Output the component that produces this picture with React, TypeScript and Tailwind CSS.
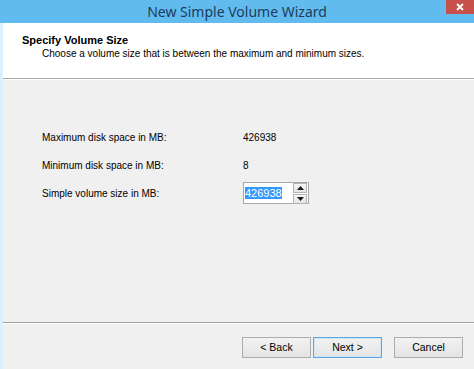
import React from 'react';

const labelFont = { fontFamily: '"Liberation Sans", Arial, sans-serif' };

function SpinButton({ up }: { up?: boolean }) {
  return (
    <div className="flex h-[10px] w-[14px] items-center justify-center border border-[#b5b5b5] bg-gradient-to-b from-[#f7f7f7] to-[#e3e3e3]">
      <svg width="7" height="4" viewBox="0 0 7 4">
        {up ? <polygon points="3.5,0 7,4 0,4" fill="#1a1a1a" /> : <polygon points="0,0 7,0 3.5,4" fill="#1a1a1a" />}
      </svg>
    </div>
  );
}

function WizardButton({ label, primary }: { label: string; primary?: boolean }) {
  return (
    <button
      className={
        'h-[21px] w-[69px] border bg-gradient-to-b from-[#f2f2f2] to-[#e4e4e4] text-[10.5px] text-black ' +
        (primary ? 'border-[#5ea6e3] shadow-[inset_0_0_0_1px_#cfe6f8]' : 'border-[#acacac]')
      }
    >
      {label}
    </button>
  );
}

export default function App() {
  return (
    <div className="flex h-[369px] w-[474px] flex-col overflow-hidden bg-[#f0f0f0]" style={labelFont}>
      {/* Title bar */}
      <div className="relative flex h-[23px] items-center justify-center bg-[#62bbee]">
        <span className="text-[14px] leading-none text-[#1d3b5c]" style={{ fontFamily: '"Noto Sans", "Open Sans", sans-serif' }}>
          New Simple Volume Wizard
        </span>
        <div className="absolute right-0 top-0 flex h-[14px] w-[28px] items-center justify-center bg-[#c8504c]">
          <svg width="8" height="8" viewBox="0 0 8 8">
            <path d="M1 1 L7 7 M7 1 L1 7" stroke="#ffffff" strokeWidth="1.8" />
          </svg>
        </div>
      </div>

      <div className="flex flex-1">
        <div className="w-[3px] bg-[#dcf0fb]" />
        <div className="flex flex-1 flex-col">
          {/* Header */}
          <div className="h-[56px] border-b border-[#a9a9a9] bg-white pl-[19px] pt-[10px]">
            <div className="text-[11px] font-bold leading-[14px] text-black">Specify Volume Size</div>
            <div className="pl-[20px] text-[10px] leading-[14px] text-black">
              Choose a volume size that is between the maximum and minimum sizes.
            </div>
          </div>
          <div className="h-px bg-white" />

          {/* Body */}
          <div className="flex-1 pl-[39px] pt-[43px] text-[10px] text-black">
            <div className="grid grid-cols-[201px_1fr] auto-rows-[28px] items-center">
              <div>Maximum disk space in MB:</div>
              <div>426938</div>
              <div>Minimum disk space in MB:</div>
              <div>8</div>
              <div>Simple volume size in MB:</div>
              <div className="flex h-[22px] w-[66px] items-center border border-[#a8a8a8] bg-white pl-[1px] text-[11px]">
                <span className="flex-1 leading-[14px]">
                  <span className="bg-[#3399ff] text-white">426938</span>
                </span>
                <div className="flex flex-col gap-[1px] pr-[1px]">
                  <SpinButton up />
                  <SpinButton />
                </div>
              </div>
            </div>
          </div>

          {/* Footer */}
          <div className="h-px bg-[#a0a0a0]" />
          <div className="h-px bg-white" />
          <div className="flex h-[45px] items-start pl-[239px] pt-[13px]">
            <WizardButton label="< Back" />
            <div className="ml-[2px] flex">
              <WizardButton label="Next >" primary />
            </div>
            <div className="ml-[12px] flex">
              <WizardButton label="Cancel" />
            </div>
          </div>
        </div>
      </div>
    </div>
  );
}
